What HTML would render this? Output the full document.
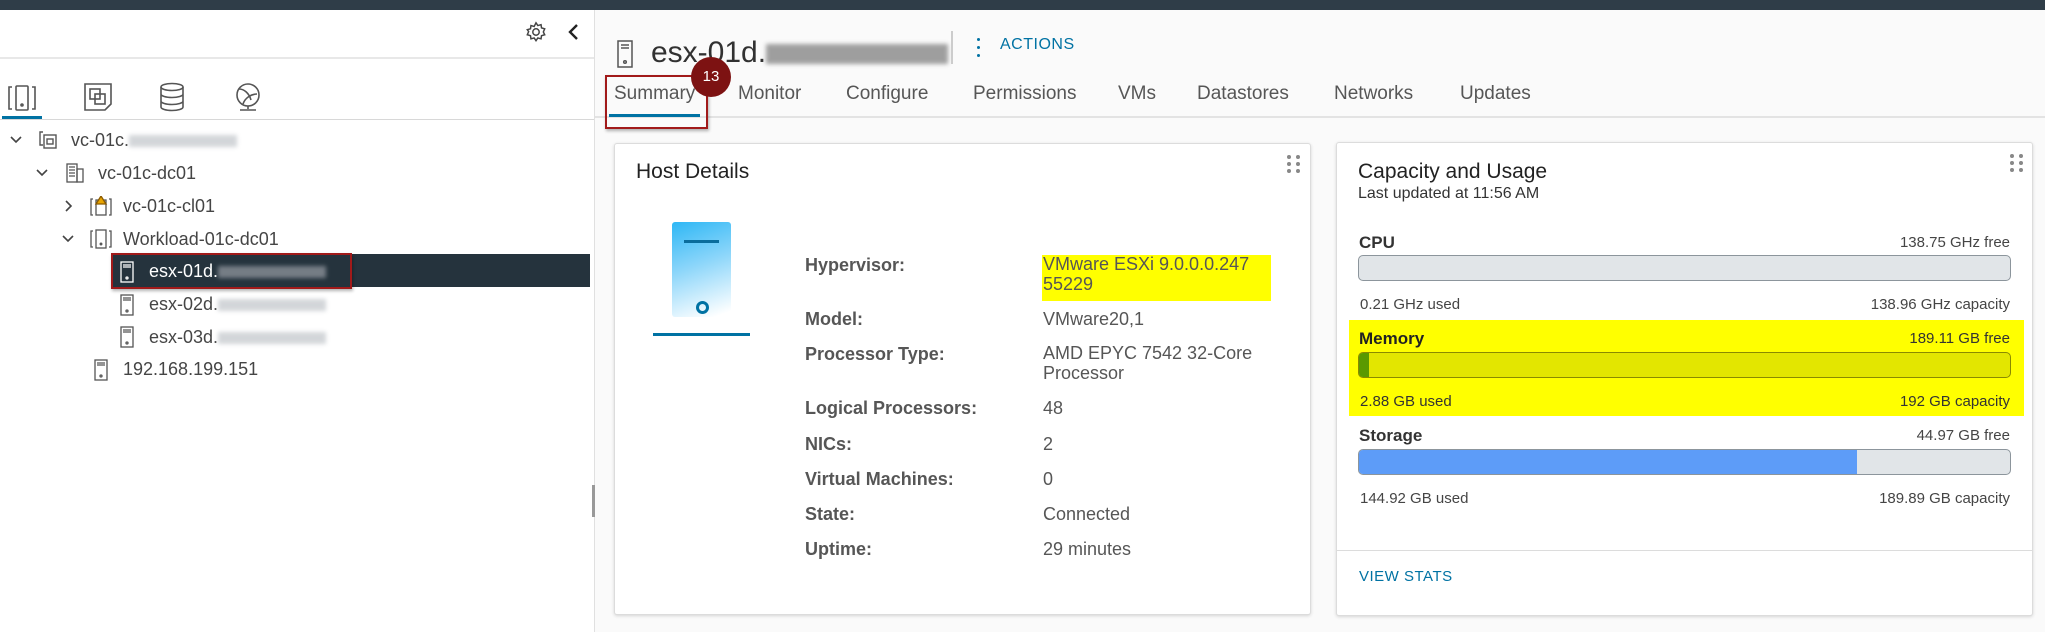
<!DOCTYPE html>
<html><head><meta charset="utf-8"><style>
*{margin:0;padding:0;box-sizing:border-box}
body{width:2045px;height:632px;overflow:hidden;background:#fafafa;font-family:"Liberation Sans",sans-serif;color:#313131;position:relative}
.a{position:absolute;white-space:nowrap}
.blur{display:inline-block;background:#c8ccd0;filter:blur(2px);opacity:.8;vertical-align:middle}
.row{font-size:18px;color:#565656;line-height:22px}
.lab{font-weight:bold;color:#565656}
.tab{font-size:19px;color:#565656;top:83px}
.sm{font-size:15px;color:#454545}
.bar{position:absolute;left:1358px;width:653px;height:26px;border:1px solid #8c959c;border-radius:5px;background:#e1e5e8;overflow:hidden}
</style></head><body>
<div class="a" style="left:0;top:0;width:2045px;height:10px;background:#2f3d48"></div>
<!-- left panel -->
<div class="a" style="left:0;top:10px;width:594px;height:622px;background:#fff"></div>
<div class="a" style="left:594px;top:10px;width:1px;height:622px;background:#e0e0e0"></div>
<div class="a" style="left:592px;top:485px;width:3px;height:32px;background:#999"></div>
<svg class="a" style="left:525px;top:21px" width="22" height="22" viewBox="0 0 24 24" fill="none" stroke="#444" stroke-width="1.6"><circle cx="12" cy="12" r="3.5"/><path d="M12 2l2 3 3.5-1 .5 3.5 3.5 1-1.5 3.5 1.5 3-3.5 1-.5 3.5-3.5-1-2 3-2-3-3.5 1-.5-3.5-3.5-1 1.5-3.5L2.5 9.5 6 8.5l.5-3.5 3.5 1z"/></svg>
<svg class="a" style="left:567px;top:23px" width="14" height="18" viewBox="0 0 14 18" fill="none" stroke="#222" stroke-width="2.4"><path d="M10 2L3 9l7 7"/></svg>
<div class="a" style="left:0;top:57px;width:594px;height:2px;background:#e8e8e8"></div>
<!-- icon tabs -->
<svg class="a" style="left:7px;top:84px" width="30" height="28" viewBox="0 0 30 28" fill="none" stroke="#555" stroke-width="1.6"><path d="M5 3H2v22h3M25 3h3v22h-3"/><rect x="9" y="2" width="12" height="24" rx="1"/><circle cx="15" cy="21" r="1"/></svg>
<svg class="a" style="left:83px;top:82px" width="30" height="30" viewBox="0 0 30 30" fill="none" stroke="#555" stroke-width="1.6"><path d="M2 2h26v20l-6 6H2z"/><rect x="7" y="7" width="10" height="10"/><rect x="12" y="12" width="10" height="10"/></svg>
<svg class="a" style="left:159px;top:82px" width="26" height="30" viewBox="0 0 26 30" fill="none" stroke="#555" stroke-width="1.6"><ellipse cx="13" cy="5" rx="11" ry="3.5"/><path d="M2 5v20c0 2 5 3.5 11 3.5s11-1.5 11-3.5V5M2 12c0 2 5 3.5 11 3.5S24 14 24 12M2 19c0 2 5 3.5 11 3.5S24 21 24 19"/></svg>
<svg class="a" style="left:234px;top:82px" width="28" height="30" viewBox="0 0 28 30" fill="none" stroke="#555" stroke-width="1.6"><circle cx="14" cy="13" r="11"/><path d="M5 7c5 0 10 4 12 11M9 22c2-6 8-10 14-10M14 24v3M6 28h16"/></svg>
<div class="a" style="left:2px;top:116px;width:40px;height:3px;background:#0072a3"></div>
<div class="a" style="left:0;top:119px;width:594px;height:1px;background:#d8d8d8"></div>
<!-- tree -->
<div class="a" style="left:111px;top:254px;width:479px;height:33px;background:#25333d"></div>
<div class="a" style="left:111px;top:253px;width:241px;height:36px;border:2px solid #a11a1a;box-shadow:1px 2px 3px rgba(0,0,0,.3)"></div>
<svg class="a" style="left:10px;top:135px" width="12" height="10" viewBox="0 0 12 10" fill="none" stroke="#444" stroke-width="1.6"><path d="M1 2l5 5 5-5"/></svg>
<svg class="a" style="left:36px;top:168px" width="12" height="10" viewBox="0 0 12 10" fill="none" stroke="#444" stroke-width="1.6"><path d="M1 2l5 5 5-5"/></svg>
<svg class="a" style="left:64px;top:200px" width="10" height="12" viewBox="0 0 10 12" fill="none" stroke="#444" stroke-width="1.6"><path d="M2 1l5 5-5 5"/></svg>
<svg class="a" style="left:62px;top:234px" width="12" height="10" viewBox="0 0 12 10" fill="none" stroke="#444" stroke-width="1.6"><path d="M1 2l5 5 5-5"/></svg>
<svg class="a" style="left:38px;top:130px" width="20" height="20" viewBox="0 0 20 20" fill="none" stroke="#555" stroke-width="1.4"><path d="M5 2H2v13h3"/><rect x="6" y="5" width="12" height="13"/><rect x="9" y="9" width="6" height="5"/></svg>
<svg class="a" style="left:66px;top:163px" width="18" height="20" viewBox="0 0 18 20" fill="none" stroke="#555" stroke-width="1.3"><rect x="1" y="1" width="10" height="18"/><rect x="11" y="6" width="6" height="13"/><path d="M3 4h6M3 7h6M3 10h6M3 13h6"/></svg>
<svg class="a" style="left:90px;top:196px" width="22" height="20" viewBox="0 0 22 20" fill="none" stroke="#555" stroke-width="1.3"><path d="M3 3H1v16h2M19 3h2v16h-2"/><rect x="6" y="4" width="10" height="15"/><path d="M11 0l5 8H6z" fill="#e8a400" stroke="#8a5a00"/></svg>
<svg class="a" style="left:90px;top:229px" width="22" height="20" viewBox="0 0 22 20" fill="none" stroke="#555" stroke-width="1.3"><path d="M3 2H1v16h2M19 2h2v16h-2"/><rect x="6" y="1" width="10" height="18"/><circle cx="11" cy="15" r=".8"/></svg>
<svg class="a" style="left:120px;top:261px" width="14" height="22" viewBox="0 0 14 22" fill="none" stroke="#fff" stroke-width="1.3"><rect x="1" y="1" width="12" height="20"/><path d="M3 4h8M3 6h8"/><circle cx="7" cy="17" r="1"/></svg>
<svg class="a" style="left:120px;top:294px" width="14" height="22" viewBox="0 0 14 22" fill="none" stroke="#555" stroke-width="1.3"><rect x="1" y="1" width="12" height="20"/><path d="M3 4h8M3 6h8"/><circle cx="7" cy="17" r="1"/></svg>
<svg class="a" style="left:120px;top:326px" width="14" height="22" viewBox="0 0 14 22" fill="none" stroke="#555" stroke-width="1.3"><rect x="1" y="1" width="12" height="20"/><path d="M3 4h8M3 6h8"/><circle cx="7" cy="17" r="1"/></svg>
<svg class="a" style="left:94px;top:359px" width="14" height="22" viewBox="0 0 14 22" fill="none" stroke="#555" stroke-width="1.3"><rect x="1" y="1" width="12" height="20"/><path d="M3 4h8M3 6h8"/><circle cx="7" cy="17" r="1"/></svg>
<div class="a row" style="left:71px;top:129px;color:#454545">vc-01c.<span class="blur" style="width:108px;height:12px"></span></div>
<div class="a row" style="left:98px;top:162px;color:#454545">vc-01c-dc01</div>
<div class="a row" style="left:123px;top:195px;color:#454545">vc-01c-cl01</div>
<div class="a row" style="left:123px;top:228px;color:#454545">Workload-01c-dc01</div>
<div class="a row" style="left:149px;top:260px;color:#fff">esx-01d.<span class="blur" style="width:108px;height:12px;background:#8a9098"></span></div>
<div class="a row" style="left:149px;top:293px;color:#454545">esx-02d.<span class="blur" style="width:108px;height:12px"></span></div>
<div class="a row" style="left:149px;top:326px;color:#454545">esx-03d.<span class="blur" style="width:108px;height:12px"></span></div>
<div class="a row" style="left:123px;top:358px;color:#454545">192.168.199.151</div>
<!-- header -->
<svg class="a" style="left:617px;top:40px" width="16" height="28" viewBox="0 0 16 28" fill="none" stroke="#555" stroke-width="1.5"><rect x="1" y="1" width="14" height="26"/><path d="M4 5h8M4 8h8"/><circle cx="8" cy="22" r="1.3"/></svg>
<div class="a" style="left:651px;top:36px;font-size:30px;color:#313131">esx-01d.<span class="blur" style="width:182px;height:20px;background:#888"></span></div>
<div class="a" style="left:951px;top:31px;width:2px;height:33px;background:#ccc"></div>
<div class="a" style="left:977px;top:38px;width:3px;height:3px;border-radius:2px;background:#0072a3;box-shadow:0 8px 0 #0072a3,0 16px 0 #0072a3"></div>
<div class="a" style="left:1000px;top:36px;font-size:16px;color:#0072a3;letter-spacing:.5px">ACTIONS</div>
<div class="tab a" style="left:614px">Summary</div>
<div class="tab a" style="left:738px">Monitor</div>
<div class="tab a" style="left:846px">Configure</div>
<div class="tab a" style="left:973px">Permissions</div>
<div class="tab a" style="left:1118px">VMs</div>
<div class="tab a" style="left:1197px">Datastores</div>
<div class="tab a" style="left:1334px">Networks</div>
<div class="tab a" style="left:1460px">Updates</div>
<div class="a" style="left:595px;top:116px;width:1450px;height:2px;background:#e3e3e3"></div>
<div class="a" style="left:609px;top:114px;width:91px;height:3px;background:#0072a3"></div>
<div class="a" style="left:605px;top:75px;width:103px;height:54px;border:2px solid #a11a1a;box-shadow:1px 2px 3px rgba(0,0,0,.3)"></div>
<div class="a" style="left:691px;top:57px;width:40px;height:40px;border-radius:50%;background:#7d1212;color:#fff;font-size:15px;text-align:center;line-height:40px">13</div>
<!-- host details card -->
<div class="a" style="left:614px;top:143px;width:697px;height:472px;background:#fff;border:1px solid #dcdcdc;border-radius:3px;box-shadow:0 1px 3px rgba(0,0,0,.15)"></div>
<div class="a" style="left:636px;top:160px;font-size:21px;color:#222">Host Details</div>
<div class="a" style="left:1287px;top:155px;width:4px;height:4px;border-radius:2px;background:#888;box-shadow:9px 0 0 #888,0 7px 0 #888,9px 7px 0 #888,0 14px 0 #888,9px 14px 0 #888"></div>
<div class="a" style="left:672px;top:222px;width:59px;height:95px;border-radius:3px;background:linear-gradient(160deg,#2eb7f5 0%,#8dd6fa 45%,#fff 95%)"></div>
<div class="a" style="left:684px;top:240px;width:35px;height:3px;background:#0a6d9c"></div>
<div class="a" style="left:696px;top:301px;width:13px;height:13px;border-radius:50%;border:3px solid #0072a3"></div>
<div class="a" style="left:653px;top:333px;width:97px;height:3px;background:#0072a3"></div>
<div class="a" style="left:1042px;top:255px;width:229px;height:46px;background:#ffff00"></div>
<div class="a row lab" style="left:805px;top:254px">Hypervisor:</div>
<div class="a row" style="left:1043px;top:254px;line-height:20px">VMware ESXi 9.0.0.0.247<br>55229</div>
<div class="a row lab" style="left:805px;top:308px">Model:</div><div class="a row" style="left:1043px;top:308px">VMware20,1</div>
<div class="a row lab" style="left:805px;top:343px">Processor Type:</div><div class="a row" style="left:1043px;top:343px;line-height:20px">AMD EPYC 7542 32-Core<br>Processor</div>
<div class="a row lab" style="left:805px;top:397px">Logical Processors:</div><div class="a row" style="left:1043px;top:397px">48</div>
<div class="a row lab" style="left:805px;top:433px">NICs:</div><div class="a row" style="left:1043px;top:433px">2</div>
<div class="a row lab" style="left:805px;top:468px">Virtual Machines:</div><div class="a row" style="left:1043px;top:468px">0</div>
<div class="a row lab" style="left:805px;top:503px">State:</div><div class="a row" style="left:1043px;top:503px">Connected</div>
<div class="a row lab" style="left:805px;top:538px">Uptime:</div><div class="a row" style="left:1043px;top:538px">29 minutes</div>
<!-- capacity card -->
<div class="a" style="left:1336px;top:142px;width:697px;height:474px;background:#fff;border:1px solid #dcdcdc;border-radius:3px;box-shadow:0 1px 3px rgba(0,0,0,.15)"></div>
<div class="a" style="left:1358px;top:160px;font-size:21px;color:#222">Capacity and Usage</div>
<div class="a" style="left:1358px;top:185px;font-size:16px;color:#333">Last updated at 11:56 AM</div>
<div class="a" style="left:2010px;top:154px;width:4px;height:4px;border-radius:2px;background:#888;box-shadow:9px 0 0 #888,0 7px 0 #888,9px 7px 0 #888,0 14px 0 #888,9px 14px 0 #888"></div>
<div class="a" style="left:1359px;top:233px;font-size:17px;font-weight:bold;color:#333">CPU</div>
<div class="a sm" style="right:35px;top:234px">138.75 GHz free</div>
<div class="bar" style="top:255px"></div>
<div class="a sm" style="left:1360px;top:296px">0.21 GHz used</div>
<div class="a sm" style="right:35px;top:296px">138.96 GHz capacity</div>
<div class="a" style="left:1349px;top:320px;width:675px;height:96px;background:#ffff00"></div>
<div class="a" style="left:1359px;top:329px;font-size:17px;font-weight:bold;color:#222">Memory</div>
<div class="a sm" style="right:35px;top:330px;color:#333">189.11 GB free</div>
<div class="bar" style="top:352px;background:#e3e600;border-color:#8a8a00"><div style="width:10px;height:100%;background:#5a9a00"></div></div>
<div class="a sm" style="left:1360px;top:393px;color:#333">2.88 GB used</div>
<div class="a sm" style="right:35px;top:393px;color:#333">192 GB capacity</div>
<div class="a" style="left:1359px;top:426px;font-size:17px;font-weight:bold;color:#333">Storage</div>
<div class="a sm" style="right:35px;top:427px">44.97 GB free</div>
<div class="bar" style="top:449px"><div style="width:498px;height:100%;background:#5d9cf8"></div></div>
<div class="a sm" style="left:1360px;top:490px">144.92 GB used</div>
<div class="a sm" style="right:35px;top:490px">189.89 GB capacity</div>
<div class="a" style="left:1337px;top:550px;width:695px;height:1px;background:#dcdcdc"></div>
<div class="a" style="left:1359px;top:568px;font-size:15px;color:#0072a3;letter-spacing:.5px">VIEW STATS</div>
</body></html>
